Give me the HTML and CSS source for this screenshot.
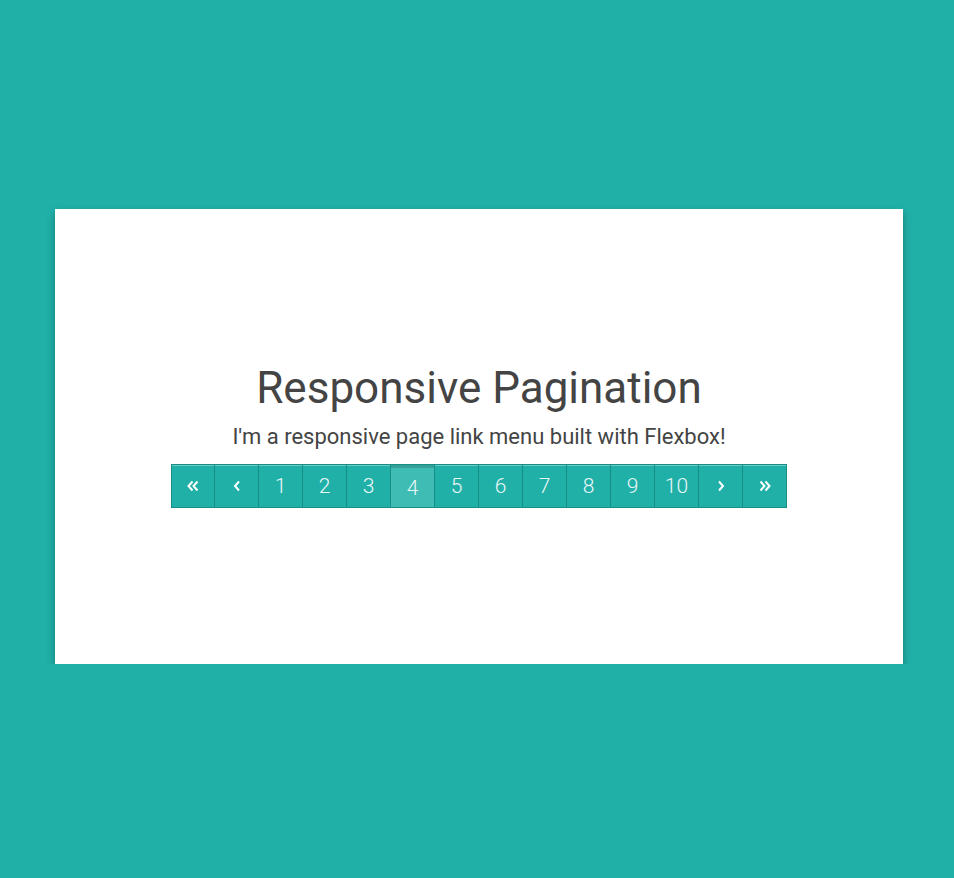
FILE: index.html
```html
<!DOCTYPE html>
<html lang="en">
<head>
    <meta charset="UTF-8">
    <meta name="viewport" content="width=device-width, initial-scale=1.0">
    <title>Responsive Pagination</title>
    <link rel="stylesheet" href="styles.css">
</head>
<body>
    <div class="card">
        <h1 class="title">Responsive Pagination</h1>
        <p class="subtitle">I'm a responsive page link menu built with Flexbox!</p>

        <ul class="pagination">
            <li class="page-item">
                <a href="#" class="page-link" aria-label="First">
                    <svg width="14" height="14" viewBox="0 0 14 14"><polyline points="6.5,2.5 2.5,7 6.5,11.5" /><polyline points="11.5,2.5 7.5,7 11.5,11.5" /></svg>
                </a>
            </li>
            <li class="page-item">
                <a href="#" class="page-link" aria-label="Previous">
                    <svg width="14" height="14" viewBox="0 0 14 14"><polyline points="9,2.5 5,7 9,11.5" /></svg>
                </a>
            </li>
            <li class="page-item"><a href="#" class="page-link">1</a></li>
            <li class="page-item"><a href="#" class="page-link">2</a></li>
            <li class="page-item"><a href="#" class="page-link">3</a></li>
            <li class="page-item active"><a href="#" class="page-link">4</a></li>
            <li class="page-item"><a href="#" class="page-link">5</a></li>
            <li class="page-item"><a href="#" class="page-link">6</a></li>
            <li class="page-item"><a href="#" class="page-link">7</a></li>
            <li class="page-item"><a href="#" class="page-link">8</a></li>
            <li class="page-item"><a href="#" class="page-link">9</a></li>
            <li class="page-item"><a href="#" class="page-link">10</a></li>
            <li class="page-item">
                <a href="#" class="page-link" aria-label="Next">
                    <svg width="14" height="14" viewBox="0 0 14 14"><polyline points="5,2.5 9,7 5,11.5" /></svg>
                </a>
            </li>
            <li class="page-item">
                <a href="#" class="page-link" aria-label="Last">
                    <svg width="14" height="14" viewBox="0 0 14 14"><polyline points="2.5,2.5 6.5,7 2.5,11.5" /><polyline points="7.5,2.5 11.5,7 7.5,11.5" /></svg>
                </a>
            </li>
        </ul>
    </div>
</body>
</html>
```

FILE: styles.css
```css
* {
    margin: 0;
    padding: 0;
    box-sizing: border-box;
}

body {
    background-color: #20b0a8;
    font-family: Roboto, "Liberation Sans", sans-serif;
    color: #444;
    padding-top: 209px;
}

.card {
    width: 848px;
    height: 455px;
    margin-left: 55px;
    padding-top: 153px;
    background-color: #fff;
    box-shadow: 0 4px 8px rgba(0, 0, 0, 0.3);
    display: flex;
    flex-direction: column;
    align-items: center;
}

.title {
    font-size: 44px;
    font-weight: 400;
    line-height: 52px;
}

.subtitle {
    font-size: 22px;
    line-height: 26px;
    margin-top: 10px;
    margin-bottom: 14px;
}

.pagination {
    list-style: none;
    display: flex;
    border: 1px solid #178d86;
    border-left: none;
}

.page-link {
    display: flex;
    align-items: center;
    justify-content: center;
    width: 44px;
    height: 42px;
    border-left: 1px solid #178d86;
    background-color: #20b0a8;
    box-shadow: inset 0 1px 0 rgba(255, 255, 255, 0.35);
    color: #e8f7f6;
    font-size: 21px;
    font-weight: 300;
    text-decoration: none;
}

.page-item:first-child .page-link {
    width: 43px;
}

.page-link svg {
    fill: none;
    stroke: #fff;
    stroke-width: 2;
}

.active .page-link {
    background-color: #3fbdb5;
    box-shadow: inset 0 3px 0 rgba(0, 0, 0, 0.15);
    padding-top: 4px;
}
```
